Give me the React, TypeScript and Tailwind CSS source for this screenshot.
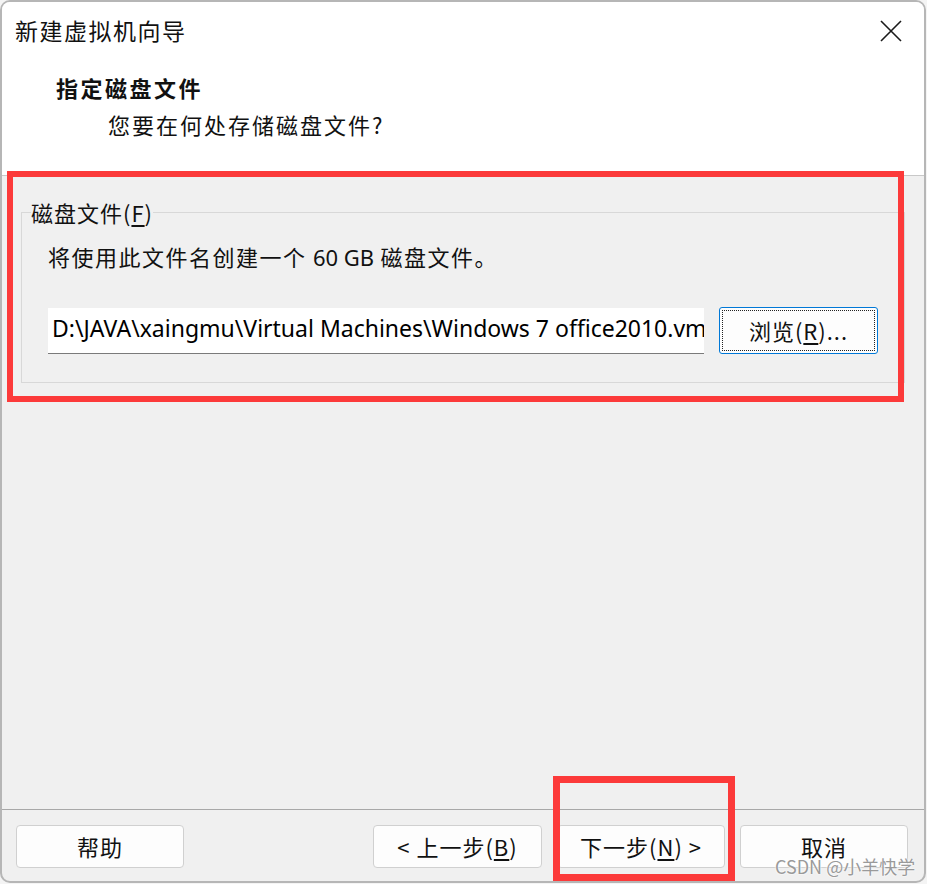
import React from "react";

const cjk = { fontFamily: '"Noto Sans CJK SC", "Noto Sans", sans-serif' };
const latin = { fontFamily: '"Noto Sans", "Noto Sans CJK SC", sans-serif' };

function Btn({ children, className = "" }: { children: React.ReactNode; className?: string }) {
  return (
    <button
      className={`relative h-[43px] w-[168px] rounded-[4px] border border-[#d0d0d0] bg-[#fdfdfd] text-[22px] tracking-[1px] text-[#111] flex items-center justify-center ${className}`}
      style={cjk}
    >
      {children}
    </button>
  );
}

export default function App() {
  return (
    <div className="relative w-[927px] h-[884px] bg-[#f4f4f4] overflow-hidden">
      <div className="w-[926px] h-[883px] rounded-[10px] border-2 border-[#b6b6b6] bg-[#f0f0f0] overflow-hidden flex flex-col">
        {/* Header */}
        <div className="h-[174px] bg-white border-b border-[#c8c8c8] flex flex-col shrink-0">
          <div className="h-[56px] flex items-center justify-between pl-[13px] pr-[22px]">
            <span className="text-[23px] tracking-[1.5px] text-[#111]" style={cjk}>
              新建虚拟机向导
            </span>
            <svg width="22" height="22" viewBox="0 0 22 22" className="mt-[1px]">
              <path d="M1 1 L21 21 M21 1 L1 21" stroke="#1a1a1a" strokeWidth="1.6" fill="none" />
            </svg>
          </div>
          <div className="mt-[13px] pl-[54px] text-[22px] leading-[32px] font-bold tracking-[2.5px] text-[#111]" style={cjk}>
            指定磁盘文件
          </div>
          <div className="mt-[5px] pl-[106px] text-[22px] leading-[32px] tracking-[2px] text-[#111]" style={cjk}>
            您要在何处存储磁盘文件?
          </div>
        </div>

        {/* Body */}
        <div className="flex-1 pt-[20px] px-[19px]">
          <fieldset className="border border-[#d8d8d8] pl-[9px] pr-[9px] pb-[28px] m-0">
            <legend className="px-0 text-[22px] leading-[32px] tracking-[1px] text-[#111]" style={cjk}>
              磁盘文件(<u className="underline-offset-[3px]">F</u>)
            </legend>
            <div className="pl-[17px] pr-[17px]">
              <div className="mt-[12px] text-[22px] leading-[32px] tracking-[1.5px] text-[#111]" style={cjk}>
                将使用此文件名创建一个 <span style={latin} className="tracking-normal">60 GB</span> 磁盘文件。
              </div>
              <div className="mt-[34px] flex items-center gap-[15px]">
                <div className="h-[46px] w-[656px] bg-white border-b border-[#7a7a7a] overflow-hidden flex items-center pl-[4px] pb-[3px]">
                  <span className="whitespace-nowrap text-[23px] text-black" style={latin}>
                    D:\JAVA\xaingmu\Virtual Machines\Windows 7 office2010.vmdk
                  </span>
                </div>
                <button
                  className="relative h-[47px] w-[159px] rounded-[3px] border border-[#0078d7] bg-[#fdfdfd] flex items-center justify-center text-[22px] tracking-[1px] text-[#111]"
                  style={cjk}
                >
                  <span className="absolute inset-[2px] border border-dotted border-[#222]" />
                  浏览(<u className="underline-offset-[3px]">R</u>)...
                </button>
              </div>
            </div>
          </fieldset>
        </div>

        {/* Footer */}
        <div className="shrink-0 border-t border-[#a8a8a8] pt-[15px] pb-[13px] pl-[14px] pr-[16px] flex items-center">
          <Btn>帮助</Btn>
          <div className="flex-1" />
          <div className="flex gap-[15px]">
            <Btn className="w-[169px]">
              &lt; 上一步(<u className="underline-offset-[3px]">B</u>)
            </Btn>
            <Btn>
              下一步(<u className="underline-offset-[3px]">N</u>) &gt;
            </Btn>
            <Btn>取消</Btn>
          </div>
        </div>
      </div>

      {/* Red annotation boxes */}
      <div className="absolute left-[7px] top-[171px] w-[897px] h-[231px] border-[6px] border-[#fc3a3a]" />
      <div className="absolute left-[553px] top-[776px] w-[182px] h-[105px] border-[7px] border-[#fc3a3a]" />

      {/* Watermark */}
      <div
        className="absolute left-[775px] top-[853px] text-[18px] text-[#9a9a9a] whitespace-nowrap"
        style={{ ...cjk, textShadow: "0 0 2px #fff, 0 0 2px #fff" }}
      >
        CSDN @小羊快学
      </div>
    </div>
  );
}
